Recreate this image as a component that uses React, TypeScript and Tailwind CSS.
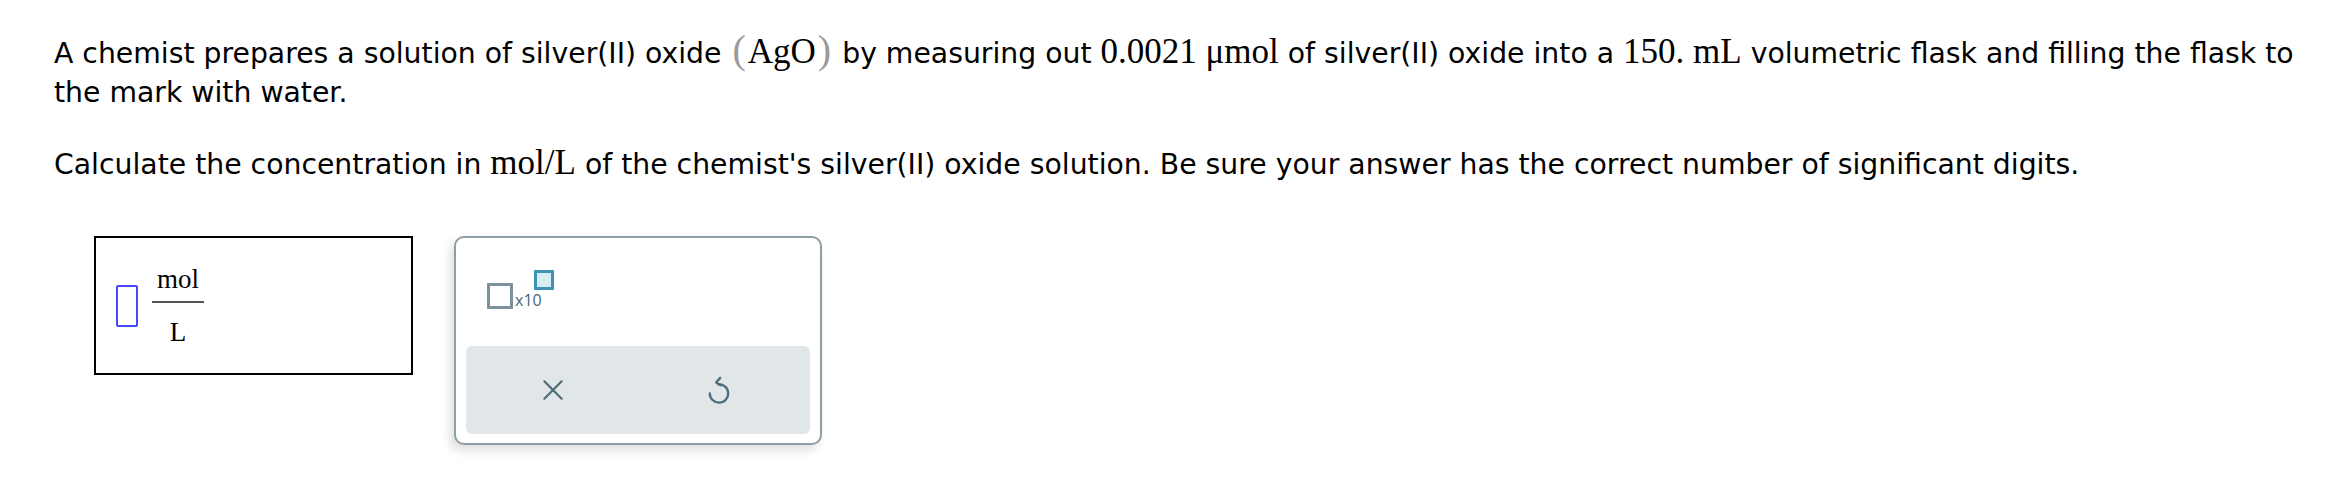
import React from "react";

const Serif = ({ children }: { children: React.ReactNode }) => (
  <span className="font-['Liberation_Serif','Times_New_Roman',serif] text-[35px]">{children}</span>
);

const Paren = ({ children }: { children: React.ReactNode }) => (
  <span className="font-['Liberation_Serif',serif] text-[40px] text-[#9a9a9a] mx-[2px]">{children}</span>
);

const TimesIcon = () => (
  <svg width="26" height="26" viewBox="0 0 24 24" fill="none" stroke="#4d6b78" strokeWidth="2" strokeLinecap="round">
    <path d="M4 4 L20 20 M20 4 L4 20" />
  </svg>
);

const UndoIcon = () => (
  <svg width="28" height="30" viewBox="0 0 24 26" fill="none" stroke="#4d6b78" strokeWidth="2" strokeLinecap="round" strokeLinejoin="round">
    <path d="M11.5 8 A8 8 0 1 1 4 16" />
    <path d="M13 2.5 L9.5 6.5 L13.5 9" />
  </svg>
);

export default function App() {
  return (
    <div className="w-[2352px] h-[478px] bg-white text-black pt-[30px] pl-[54px] font-['DejaVu_Sans','Verdana',sans-serif] text-[28.3px]">
      <p className="w-[2262px] leading-[39px]">
        A chemist prepares a solution of silver(II) oxide <Paren>(</Paren>
        <Serif>AgO</Serif>
        <Paren>)</Paren> by measuring out <Serif>0.0021 μmol</Serif> of silver(II) oxide into a{" "}
        <Serif>150. mL</Serif> volumetric flask and filling the flask to the mark with water.
      </p>
      <p className="mt-[31px] leading-[39px]">
        Calculate the concentration in <Serif>mol/L</Serif> of the chemist's silver(II) oxide solution. Be sure your answer
        has the correct number of significant digits.
      </p>

      <div className="flex items-start gap-[41px] mt-[52px] ml-[40px]">
        <div className="w-[319px] h-[139px] border-2 border-black flex items-center pl-[20px]">
          <div className="w-[22px] h-[42px] border-[2.5px] border-[#4747ff] rounded-[2px]" />
          <div className="ml-[14px] flex flex-col items-center font-['Liberation_Serif',serif] text-[27px] leading-[28px]">
            <span>mol</span>
            <div className="w-[52px] h-[2px] bg-[#555] mt-[8px] mb-[15px]" />
            <span>L</span>
          </div>
        </div>

        <div className="w-[368px] h-[209px] border-2 border-[#8d9ea7] rounded-[10px] bg-white shadow-[-4px_6px_10px_rgba(0,0,0,0.12)] flex flex-col">
          <div className="h-[108px] pl-[31px] pt-[45px]">
            <div className="relative flex items-end">
              <div className="w-[26px] h-[26px] border-[3px] border-[#7d929c]" />
              <span className="ml-[2px] mb-[-3px] text-[16px] text-[#4d6470] font-['Open_Sans',sans-serif]">x10</span>
              <div className="absolute left-[47px] top-[-13px] w-[20px] h-[20px] border-[3px] border-[#3d95b3] bg-[#d6eef4]" />
            </div>
          </div>
          <div className="mx-[10px] h-[88px] bg-[#e1e6e9] rounded-[6px] flex items-center justify-between pl-[74px] pr-[77px]">
            <TimesIcon />
            <UndoIcon />
          </div>
        </div>
      </div>
    </div>
  );
}
